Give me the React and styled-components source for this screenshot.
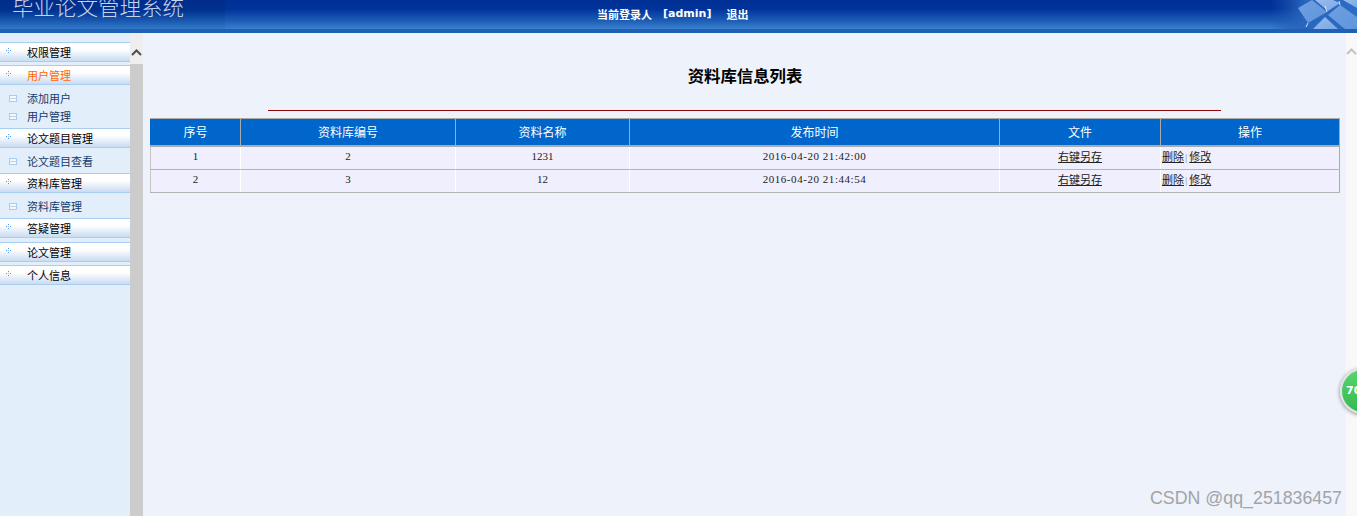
import React from 'react';
import styled, { createGlobalStyle } from 'styled-components';

const Global = createGlobalStyle`
  html, body { margin: 0; padding: 0; height: 100%; overflow: hidden; }
  body { font-family: "Liberation Serif", "Noto Sans CJK SC", serif; font-size: 12px; color: #000; }
`;

const Page = styled.div`
  position: relative;
  width: 1357px;
  height: 516px;
  overflow: hidden;
  display: flex;
  flex-direction: column;
`;

const Header = styled.header`
  flex: none;
  height: 29px;
  border-bottom: 4px solid #1f60b4;
  background: linear-gradient(#003093 0%, #00329a 30%, #1b5cb4 70%, #3a80cf 100%);
  display: flex;
  overflow: hidden;
`;

const LogoBox = styled.div`
  flex: none;
  width: 225px;
  height: 29px;
  padding-left: 12px;
  box-sizing: border-box;
  background: linear-gradient(#002c8c 0%, #00318f 35%, #1756ae 70%, #337ac9 100%);
  overflow: hidden;
`;

const LogoText = styled.div`
  margin-top: -8px;
  font-family: "Noto Sans CJK SC", sans-serif;
  font-size: 21.5px;
  font-weight: 300;
  line-height: 28px;
  color: #c6d3ea;
  white-space: nowrap;
`;

const UserInfo = styled.div`
  flex: 1;
  display: flex;
  gap: 14px;
  padding: 7px 0 0 372px;
  font-family: "Noto Sans CJK SC", sans-serif;
  font-size: 11px;
  line-height: 14px;
  font-weight: 700;
  color: #fff;
  white-space: nowrap;
`;

const UserName = styled.span`
  font-family: "DejaVu Sans", sans-serif;
  font-size: 11px;
  margin-left: -3px;
  margin-right: 1px;
`;

const Corner = styled.svg`
  flex: none;
  display: block;
`;

const Body = styled.div`
  flex: 1;
  display: flex;
  min-height: 0;
`;

const Sidebar = styled.nav`
  flex: none;
  width: 130px;
  padding-top: 9px;
  box-sizing: border-box;
  background: #e2effb;
`;

const MenuBar = styled.div`
  height: 18px;
  margin-bottom: ${p => p.$gap}px;
  border-top: 1px solid #a9cdf1;
  border-bottom: 1px solid #a9cdf1;
  background: linear-gradient(#ffffff 0%, #ffffff 35%, #c9dcf1 100%);
  display: flex;
  align-items: center;
  padding-left: 6px;
  gap: 15px;
  font-family: "Noto Sans CJK SC", sans-serif;
  font-size: 11px;
  color: ${p => (p.$active ? '#ff6600' : '#000')};
`;

const Dots = styled.svg`
  flex: none;
  width: 6px;
  height: 6px;
  margin-top: -3px;
`;

const SubList = styled.ul`
  list-style: none;
  margin: 0;
  padding: 4px 0 3px;
`;

const SubItem = styled.li`
  height: 18px;
  display: flex;
  align-items: center;
  padding-left: 9px;
  gap: 10px;
  font-family: "Noto Sans CJK SC", sans-serif;
  font-size: 11px;
  color: #143a6b;
`;

const SubIcon = styled.span`
  flex: none;
  width: 6px;
  height: 5px;
  border: 1px solid #a9cdf1;
  background: linear-gradient(#f5f9fe 0 2px, #b9d3ee 2px 3px, #f5f9fe 3px);
`;

const SideScroll = styled.div`
  flex: none;
  width: 13px;
  background: #cccccc;
  display: flex;
  flex-direction: column;
`;

const SideScrollTop = styled.div`
  height: 31px;
  background: #eeeeee;
  display: flex;
  justify-content: center;
  padding-top: 16px;
  box-sizing: border-box;
`;

const Chevron = styled.svg`
  display: block;
  width: 11px;
  height: 7px;
`;

const Main = styled.main`
  flex: 1;
  min-width: 0;
  background: #edf2fb;
  padding: 0 6px 0 7px;
`;

const Title = styled.h1`
  margin: 0;
  padding-top: 31px;
  height: 46px;
  text-align: center;
  font-family: "Noto Sans CJK SC", sans-serif;
  font-size: 16.4px;
  line-height: 22px;
  font-weight: 700;
`;

const Rule = styled.hr`
  width: 953px;
  height: 1px;
  margin: 0 0 7px 118px;
  border: 0;
  background: #8f0606;
`;

const Table = styled.table`
  width: 1189px;
  border-collapse: collapse;
  table-layout: fixed;
`;

const Th = styled.th`
  height: 24px;
  padding: 0 0 2px;
  background: #0066cc;
  border: 1px solid #aaaaaa;
  border-bottom-width: 2px;
  color: #fff;
  font-family: "Noto Sans CJK SC", sans-serif;
  font-size: 12px;
  font-weight: 400;
  &:first-child { border-left-color: #0066cc; }
`;

const Td = styled.td`
  height: 18px;
  padding: 0 0 4px ${p => (p.$left ? '1px' : '0')};
  background: #f0effd;
  border-top: 1px solid #aaaaaa;
  border-bottom: 1px solid #b4b4b4;
  border-left: 1px solid #fff;
  text-align: ${p => (p.$left ? 'left' : 'center')};
  font-size: 11px;
  letter-spacing: ${p => (p.$time ? '0.55px' : '0')};
  color: #222;
  &:first-child { border-left: 1px solid #c4c4c4; }
  &:last-child { border-right: 1px solid #aaaaaa; }
`;

const CellLink = styled.a`
  font-family: "Noto Sans CJK SC", sans-serif;
  font-size: 11px;
  color: #222;
  text-decoration: underline;
`;

const Sep = styled.span`
  color: #7d8fb5;
  margin: 0 2px 0 1px;
`;

const RightScroll = styled.div`
  flex: none;
  width: 11px;
  background: #f8f8f8;
  padding-top: 15px;
  box-sizing: border-box;
`;

const Badge = styled.div`
  position: absolute;
  left: 1340px;
  top: 368px;
  width: 46px;
  height: 46px;
  box-sizing: border-box;
  border: 2px solid #dfe3e6;
  border-radius: 50%;
  background: linear-gradient(#5bd36d, #35b950);
  box-shadow: 0 1px 4px rgba(0, 0, 0, 0.45);
  color: #fff;
  font-family: "DejaVu Sans", sans-serif;
  font-size: 11px;
  font-weight: 700;
  line-height: 41px;
  padding-left: 4px;
`;

const Watermark = styled.div`
  position: absolute;
  right: 15px;
  bottom: 8px;
  font-family: "Liberation Sans", sans-serif;
  font-size: 17.8px;
  line-height: 20px;
  color: #a2a4a8;
`;

const menu = [
  { name: '权限管理', gap: 3 },
  { name: '用户管理', gap: 0, active: true, items: ['添加用户', '用户管理'] },
  { name: '论文题目管理', gap: 0, items: ['论文题目查看'] },
  { name: '资料库管理', gap: 0, items: ['资料库管理'] },
  { name: '答疑管理', gap: 4 },
  { name: '论文管理', gap: 3 },
  { name: '个人信息', gap: 3 },
];

const rows = [
  { id: 1, code: 2, name: '1231', time: '2016-04-20 21:42:00' },
  { id: 2, code: 3, name: '12', time: '2016-04-20 21:44:54' },
];

const columns = [
  { label: '序号', width: 90 },
  { label: '资料库编号', width: 215 },
  { label: '资料名称', width: 174 },
  { label: '发布时间', width: 370 },
  { label: '文件', width: 161 },
  { label: '操作', width: 179 },
];

function MenuDots() {
  return (
    <Dots viewBox="0 0 6 6">
      <rect x="2" y="0" width="1" height="1" fill="#4f96e6" />
      <rect x="0" y="2" width="1" height="1" fill="#4f96e6" />
      <rect x="2" y="2" width="1" height="1" fill="#8fbdf0" />
      <rect x="4" y="2" width="1" height="1" fill="#4f96e6" />
      <rect x="2" y="4" width="1" height="1" fill="#4f96e6" />
    </Dots>
  );
}

function ChevronUp({ color }) {
  return (
    <Chevron viewBox="0 0 11 7">
      <path d="M1 6 L5.5 1.5 L10 6" fill="none" stroke={color} strokeWidth="2" />
    </Chevron>
  );
}

function KeyboardCorner() {
  return (
    <Corner width="87" height="29" viewBox="0 0 87 29">
      <defs>
        <linearGradient id="base" x1="0" y1="0" x2="1" y2="0">
          <stop offset="0" stopColor="#1a55ad" stopOpacity="0" />
          <stop offset="0.4" stopColor="#2a66bd" />
          <stop offset="1" stopColor="#2c6cc4" />
        </linearGradient>
        <linearGradient id="key" x1="0" y1="0" x2="1" y2="1">
          <stop offset="0" stopColor="#6f9fe0" />
          <stop offset="1" stopColor="#5f96dc" />
        </linearGradient>
        <linearGradient id="keyLight" x1="0" y1="0" x2="1" y2="1">
          <stop offset="0" stopColor="#98bcec" />
          <stop offset="1" stopColor="#79a8e4" />
        </linearGradient>
      </defs>
      <rect width="87" height="29" fill="url(#base)" />
      <path d="M28 8 L42 0 L57 12 L38 23 Z" fill="url(#key)" />
      <path d="M45 0 L63 0 L70 3 L58 11 Z" fill="url(#keyLight)" />
      <path d="M58 15 L70 5 L87 17 L87 29 L75 29 Z" fill="url(#key)" />
      <path d="M43 29 L55 17 L68 29 Z" fill="url(#keyLight)" />
      <path d="M73 0 L87 0 L87 8 Z" fill="url(#keyLight)" />
      <path d="M38 23 L36 27 M57 12 L55 6 M70 5 L69 1" fill="none" stroke="#dbe8fa" strokeWidth="1" />
    </Corner>
  );
}

export default function App() {
  return (
    <Page>
      <Global />
      <Header>
        <LogoBox>
          <LogoText>毕业论文管理系统</LogoText>
        </LogoBox>
        <UserInfo>
          <span>当前登录人</span>
          <UserName>[admin]</UserName>
          <span>退出</span>
        </UserInfo>
        <KeyboardCorner />
      </Header>
      <Body>
        <Sidebar>
          {menu.map(group => (
            <div key={group.name}>
              <MenuBar $active={group.active} $gap={group.gap}>
                <MenuDots />
                {group.name}
              </MenuBar>
              {group.items && (
                <SubList>
                  {group.items.map(item => (
                    <SubItem key={item}>
                      <SubIcon />
                      {item}
                    </SubItem>
                  ))}
                </SubList>
              )}
            </div>
          ))}
        </Sidebar>
        <SideScroll>
          <SideScrollTop>
            <ChevronUp color="#4f4f4f" />
          </SideScrollTop>
        </SideScroll>
        <Main>
          <Title>资料库信息列表</Title>
          <Rule />
          <Table>
            <colgroup>
              {columns.map(c => (
                <col key={c.label} width={c.width} />
              ))}
            </colgroup>
            <thead>
              <tr>
                {columns.map(c => (
                  <Th key={c.label}>{c.label}</Th>
                ))}
              </tr>
            </thead>
            <tbody>
              {rows.map(r => (
                <tr key={r.id}>
                  <Td>{r.id}</Td>
                  <Td>{r.code}</Td>
                  <Td>{r.name}</Td>
                  <Td $time>{r.time}</Td>
                  <Td>
                    <CellLink href="#">右键另存</CellLink>
                  </Td>
                  <Td $left>
                    <CellLink href="#">删除</CellLink>
                    <Sep>|</Sep>
                    <CellLink href="#">修改</CellLink>
                  </Td>
                </tr>
              ))}
            </tbody>
          </Table>
        </Main>
        <RightScroll>
          <ChevronUp color="#c4c4c4" />
        </RightScroll>
      </Body>
      <Badge>70</Badge>
      <Watermark>CSDN @qq_251836457</Watermark>
    </Page>
  );
}
